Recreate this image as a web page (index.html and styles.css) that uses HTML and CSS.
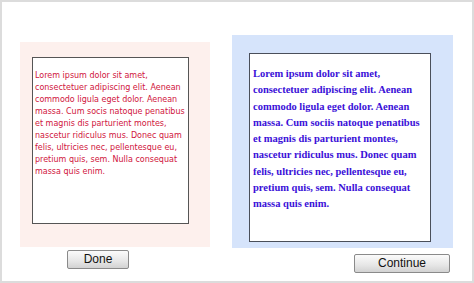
FILE: index.html
```html
<!DOCTYPE html>
<html>
<head>
<meta charset="utf-8">
<link rel="stylesheet" href="styles.css">
</head>
<body>
<div class="frame">
  <div class="col col-left">
    <div class="panel panel-pink">
      <div class="box box-left">
        <p class="text-red">Lorem ipsum dolor sit amet, consectetuer adipiscing elit. Aenean commodo ligula eget dolor. Aenean massa. Cum socis natoque penatibus et magnis dis parturient montes, nascetur ridiculus mus. Donec quam felis, ultricies nec, pellentesque eu, pretium quis, sem. Nulla consequat massa quis enim.</p>
      </div>
    </div>
    <button class="btn btn-done">Done</button>
  </div>
  <div class="col col-right">
    <div class="panel panel-blue">
      <div class="box box-right">
        <p class="text-blue">Lorem ipsum dolor sit amet, consectetuer adipiscing elit. Aenean commodo ligula eget dolor. Aenean massa. Cum sociis natoque penatibus et magnis dis parturient montes, nascetur ridiculus mus. Donec quam felis, ultricies nec, pellentesque eu, pretium quis, sem. Nulla consequat massa quis enim.</p>
      </div>
    </div>
    <button class="btn btn-continue">Continue</button>
  </div>
</div>
</body>
</html>
```

FILE: styles.css
```css
html, body {
  margin: 0;
  padding: 0;
  background: #ffffff;
}

.frame {
  box-sizing: border-box;
  width: 474px;
  height: 283px;
  border: 2px solid #dcdcdc;
  background: #ffffff;
  display: flex;
  align-items: flex-start;
}

.col {
  display: flex;
  flex-direction: column;
}

.col-left {
  margin-left: 18px;
  margin-top: 40px;
}

.col-right {
  margin-left: 22px;
  margin-top: 33px;
}

.panel {
  box-sizing: border-box;
}

.panel-pink {
  width: 190px;
  height: 205px;
  background: #fdf0ed;
  padding: 15px 0 0 12px;
}

.panel-blue {
  width: 221px;
  height: 213px;
  background: #d6e4fb;
  padding: 18px 0 0 17px;
}

.box {
  box-sizing: border-box;
  background: #ffffff;
}

.box-left {
  width: 157px;
  height: 167px;
  border: 1px solid #555555;
  padding: 12px 2px 0 2px;
}

.box-right {
  width: 182px;
  height: 189px;
  border: 1px solid #4a4f5a;
  padding: 12px 2px 0 3px;
}

.text-red {
  margin: 0;
  font-family: "DejaVu Sans", Verdana, sans-serif;
  font-size: 8px;
  line-height: 12px;
  color: #d0143c;
}

.text-blue {
  margin: 0;
  font-family: "Liberation Serif", "Times New Roman", serif;
  font-weight: bold;
  font-size: 10.5px;
  line-height: 16.25px;
  color: #3a10d8;
}

.btn {
  box-sizing: border-box;
  height: 19px;
  padding: 0;
  border: 1px solid #8a8a8a;
  border-radius: 2px;
  background: linear-gradient(#fbfbfb, #e6e6e6 60%, #d2d2d2);
  font-family: "Liberation Sans", Arial, sans-serif;
  font-size: 12px;
  color: #111111;
  line-height: 17px;
}

.btn-done {
  width: 62px;
  margin-top: 3px;
  margin-left: 47px;
}

.btn-continue {
  width: 96px;
  margin-top: 6px;
  margin-left: 122px;
}
```
